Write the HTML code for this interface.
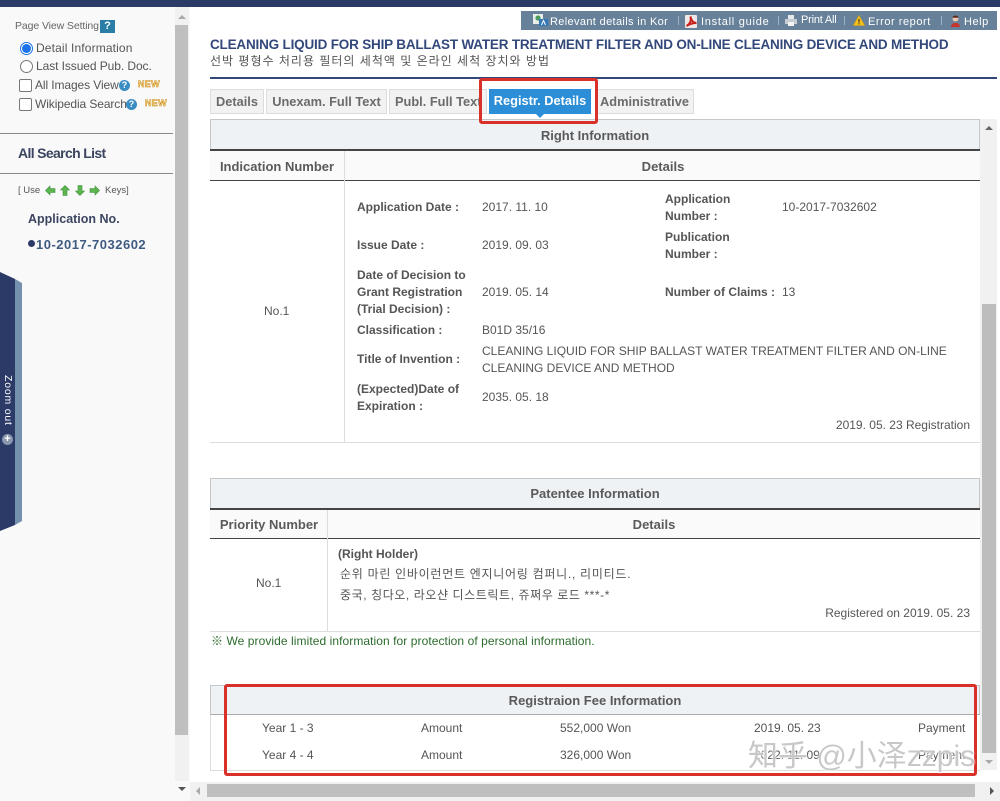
<!DOCTYPE html>
<html><head><meta charset="utf-8"><style>
html,body{margin:0;padding:0}
body{width:1000px;height:801px;position:relative;overflow:hidden;background:#fff;font-family:"Liberation Sans","Noto Sans CJK KR",sans-serif;font-size:12px;color:#555}
.t,.b{position:absolute;white-space:nowrap;line-height:17px}
.l{font-weight:bold;color:#555}
.h{font-weight:bold;color:#5a5a5a;font-size:13px;transform:translateX(-50%)}
.bar{position:absolute;left:210px}
.tab{position:absolute;top:89px;height:25px;background:#f2f2f2;border:1px solid #dcdcdc;box-sizing:border-box;font-weight:bold;color:#6b6b6b;font-size:12.8px;line-height:24px;text-align:center;white-space:nowrap;overflow:hidden}
.red{position:absolute;border:3px solid #d9302a;border-radius:3px;box-sizing:border-box}
.tb{position:absolute;top:15px;color:#fff;font-size:11px;letter-spacing:.75px;line-height:14px;white-space:nowrap}
.sep{position:absolute;top:16px;width:1px;height:9px;background:#9fb2c3}
.side{color:#555;font-size:12px}
.box{position:absolute;width:11px;height:11px;border:1px solid #777;border-radius:2px;background:#fff;left:19px}
.new{position:absolute;color:#fbe6a6;-webkit-text-stroke:.5px #c9860f;font-size:9px;font-weight:bold;line-height:9px;letter-spacing:.3px}
.q{position:absolute;width:11px;height:11px;border-radius:50%;background:#3a8cc4;color:#fff;font-size:9px;font-weight:bold;line-height:11px;text-align:center}
</style></head><body>
<div class="b" style="left:0;top:0;width:1000px;height:7px;background:#2b3a67"></div>
<div class="b" style="left:0;top:7px;width:190px;height:794px;background:#f9f9fa"></div>

<!-- left scrollbar -->
<div class="b" style="left:175px;top:7px;width:14px;height:774px;background:#f1f1f1"></div>
<div class="b" style="left:175px;top:25px;width:13px;height:710px;background:#bfbfbf"></div>
<svg class="b" style="left:176px;top:13px" width="12" height="8"><path d="M2 6L6 2L10 6Z" fill="#aaa"/></svg>
<svg class="b" style="left:176px;top:785px" width="12" height="8"><path d="M2 2L6 6L10 2Z" fill="#555"/></svg>

<!-- sidebar -->
<div class="t" style="left:15px;top:18px;font-size:10.5px;color:#666;letter-spacing:-.1px">Page View Setting</div>
<div class="b" style="left:100px;top:20px;width:15px;height:13px;background:#2a7ea6;color:#fff;font-weight:bold;font-size:11px;line-height:13px;text-align:center">?</div>
<div class="b" style="left:20px;top:42px;width:11px;height:11px;border:1px solid #1a73e8;border-radius:50%;background:#fff"></div>
<div class="b" style="left:22px;top:44px;width:9px;height:9px;border-radius:50%;background:#1a73e8"></div>
<div class="t side" style="left:36px;top:40px;letter-spacing:.14px">Detail Information</div>
<div class="b" style="left:20px;top:60px;width:11px;height:11px;border:1px solid #777;border-radius:50%;background:#fff"></div>
<div class="t side" style="left:36px;top:58px;letter-spacing:-.08px">Last Issued Pub. Doc.</div>
<div class="box" style="top:79px"></div>
<div class="t side" style="left:35px;top:77px;letter-spacing:-.1px">All Images View</div>
<div class="q" style="left:119px;top:80px">?</div>
<div class="new" style="left:138px;top:80px">NEW</div>
<div class="box" style="top:98px"></div>
<div class="t side" style="left:35px;top:96px;letter-spacing:-.1px">Wikipedia Search</div>
<div class="q" style="left:126px;top:99px">?</div>
<div class="new" style="left:145px;top:99px">NEW</div>
<div class="b" style="left:0;top:133px;width:173px;height:1px;background:#8a8a8a"></div>
<div class="t" style="left:18px;top:145px;font-size:14px;font-weight:bold;color:#3c4560;letter-spacing:-.65px">All Search List</div>
<div class="b" style="left:0;top:173px;width:173px;height:1px;background:#8a8a8a"></div>
<div class="t" style="left:18px;top:182px;font-size:9.5px;color:#555">[ Use</div>
<svg class="b" style="left:45px;top:185px" width="56" height="12"><g fill="#5cb54f" stroke="#3f8f3a" stroke-width=".6"><path d="M.5 5.500L5 1V3.500H10V7.500H5V10Z"/><path d="M20 .5L24.500 5H22V10.500H18V5H15.500Z"/><path d="M35 10.500L30.500 6H33V.5H37V6H39.500Z"/><path d="M54.500 5.500L50 1V3.500H45V7.500H50V10Z"/></g></svg>
<div class="t" style="left:105px;top:182px;font-size:9.5px;color:#555">Keys]</div>
<div class="t" style="left:28px;top:211px;font-size:12.5px;font-weight:bold;color:#3c4560">Application No.</div>
<div class="b" style="left:28px;top:240px;width:7px;height:7px;border-radius:50%;background:#2b3a67"></div>
<div class="t" style="left:36px;top:236px;font-size:13px;font-weight:bold;color:#3f5b80;letter-spacing:.5px">10-2017-7032602</div>

<!-- zoom out tab -->
<svg class="b" style="left:0;top:270px" width="24" height="265"><path d="M0 2L15 9V255L0 261Z" fill="#2b3a67"/><path d="M15 9L22 13V251L15 255Z" fill="#7590ad"/></svg>
<div class="t" style="left:0px;top:375px;width:15px;height:50px;color:#fff;font-size:10.5px;writing-mode:vertical-rl;letter-spacing:.8px;line-height:15px">Zoom out</div>
<div class="b" style="left:2px;top:434px;width:11px;height:11px;border-radius:50%;background:#8a97ae;color:#fff;font-size:11px;line-height:11px;text-align:center;font-weight:bold">+</div>

<!-- toolbar -->
<div class="b" style="left:521px;top:11px;width:476px;height:19px;background:#668199"></div>
<svg class="b" style="left:533px;top:13px" width="16" height="14"><rect x="0" y="1" width="10" height="10" fill="#e9efe8"/><circle cx="5" cy="5" r="2.6" fill="#4a9a62"/><rect x="6" y="6" width="9" height="7" fill="#3478b8"/><path d="M8.500 12L10.500 7.500L12.500 12" fill="none" stroke="#fff" stroke-width="1"/></svg>
<div class="tb" style="left:550px;letter-spacing:.35px">Relevant details in Kor</div>
<div class="sep" style="left:678px"></div>
<svg class="b" style="left:685px;top:15px" width="13" height="13"><rect width="12" height="13" rx="1" fill="#f0e8e6"/><path d="M1.500 11C5 9 6.500 5.500 5.500 1.500C6 5.500 8.500 8 11.500 8C8 8 4.500 9 1.500 11Z" fill="none" stroke="#c8201c" stroke-width="2"/></svg>
<div class="tb" style="left:701px">Install guide</div>
<div class="sep" style="left:778px"></div>
<svg class="b" style="left:785px;top:15px" width="12" height="11"><rect x="3" y="0" width="6" height="4" fill="#e6e9ec"/><rect x="0" y="4" width="12" height="5" fill="#c5ccd4"/><rect x="3" y="7" width="6" height="4" fill="#f5f5f5"/></svg>
<div class="tb" style="left:801px;top:13px;letter-spacing:-.2px;font-size:11px">Print All</div>
<div class="sep" style="left:844px"></div>
<svg class="b" style="left:853px;top:15px" width="12" height="11"><path d="M6 .5L11.700 10.500H.3Z" fill="#f2c21a" stroke="#d8a010" stroke-width=".6"/><rect x="5.400" y="4" width="1.200" height="3.600" fill="#533"/><rect x="5.400" y="8.200" width="1.200" height="1.200" fill="#533"/></svg>
<div class="tb" style="left:868px;letter-spacing:.55px">Error report</div>
<div class="sep" style="left:941px"></div>
<svg class="b" style="left:950px;top:15px" width="11" height="12"><circle cx="5.500" cy="3.500" r="3" fill="#efc6ae"/><path d="M5.500 .5a3 2.200 0 0 1 3 2.200h-6a3 2.200 0 0 1 3-2.200Z" fill="#5a2a22"/><path d="M1 12C1 6.500 10 6.500 10 12Z" fill="#c8352c"/></svg>
<div class="tb" style="left:964px;letter-spacing:.55px">Help</div>

<!-- title -->
<div class="t" style="left:210px;top:36px;font-size:13.5px;font-weight:bold;color:#33487a;letter-spacing:-.19px">CLEANING LIQUID FOR SHIP BALLAST WATER TREATMENT FILTER AND ON-LINE CLEANING DEVICE AND METHOD</div>
<div class="t" style="left:210px;top:53px;font-size:12px;color:#555;letter-spacing:1px">선박 평형수 처리용 필터의 세척액 및 온라인 세척 장치와 방법</div>
<div class="bar" style="top:77px;width:787px;height:2px;background:#33487a"></div>

<!-- tabs -->
<div class="tab" style="left:210px;width:54px">Details</div>
<div class="tab" style="left:266px;width:121px">Unexam. Full Text</div>
<div class="tab" style="left:389px;width:98px;text-align:left;padding-left:5px">Publ. Full Text</div>
<div class="b" style="left:489px;top:89px;width:102px;height:25px;background:#2b8ed6;color:#fff;font-weight:bold;font-size:12.8px;line-height:24px;text-align:center;white-space:nowrap">Registr. Details</div>
<div class="b" style="left:536px;top:114px;width:0;height:0;border:4px solid transparent;border-top-color:#2b8ed6;border-bottom:0"></div>
<div class="tab" style="left:595px;width:99px">Administrative</div>

<!-- inner scrollbar -->
<div class="b" style="left:980px;top:119px;width:17px;height:651px;background:#f1f1f1"></div>
<div class="b" style="left:982px;top:304px;width:14px;height:449px;background:#bdbdbd"></div>
<svg class="b" style="left:983px;top:124px" width="12" height="8"><path d="M2 6L6 2L10 6Z" fill="#666"/></svg>
<svg class="b" style="left:983px;top:758px" width="12" height="8"><path d="M2 2L6 6L10 2Z" fill="#aaa"/></svg>
<div class="b" style="left:190px;top:782px;width:810px;height:19px;background:#f1f1f1"></div>
<div class="b" style="left:207px;top:784px;width:768px;height:13px;background:#bfbfbf"></div>
<svg class="b" style="left:194px;top:786px" width="8" height="10"><path d="M6 1L2 5L6 9Z" fill="#aaa"/></svg>
<svg class="b" style="left:988px;top:786px" width="8" height="10"><path d="M2 1L6 5L2 9Z" fill="#555"/></svg>

<!-- Right Information -->
<div class="bar" style="top:119px;width:770px;height:30px;background:#eef2f5;border:1px solid #c4c8cb;border-bottom:0;box-sizing:border-box"></div>
<div class="t h" style="left:595px;top:127px">Right Information</div>
<div class="bar" style="top:149px;width:770px;height:2px;background:#444"></div>
<div class="bar" style="top:151px;width:770px;height:29px;background:#fafafa"></div>
<div class="t h" style="left:277px;top:158px">Indication Number</div>
<div class="t h" style="left:663px;top:158px">Details</div>
<div class="bar" style="top:180px;width:770px;height:1px;background:#444"></div>
<div class="b" style="left:344px;top:151px;width:1px;height:291px;background:#ddd"></div>
<div class="bar" style="top:442px;width:770px;height:1px;background:#ddd"></div>
<div class="t" style="left:264px;top:303px">No.1</div>

<div class="t l" style="left:357px;top:199px">Application Date :</div>
<div class="t" style="left:482px;top:199px">2017. 11. 10</div>
<div class="t l" style="left:665px;top:191px">Application<br>Number :</div>
<div class="t" style="left:782px;top:199px">10-2017-7032602</div>
<div class="t l" style="left:357px;top:237px">Issue Date :</div>
<div class="t" style="left:482px;top:237px">2019. 09. 03</div>
<div class="t l" style="left:665px;top:229px">Publication<br>Number :</div>
<div class="t l" style="left:357px;top:267px">Date of Decision to<br>Grant Registration<br>(Trial Decision) :</div>
<div class="t" style="left:482px;top:284px">2019. 05. 14</div>
<div class="t l" style="left:665px;top:284px">Number of Claims :</div>
<div class="t" style="left:782px;top:284px">13</div>
<div class="t l" style="left:357px;top:322px">Classification :</div>
<div class="t" style="left:482px;top:322px">B01D 35/16</div>
<div class="t l" style="left:357px;top:351px">Title of Invention :</div>
<div class="t" style="left:482px;top:343px">CLEANING LIQUID FOR SHIP BALLAST WATER TREATMENT FILTER AND ON-LINE<br>CLEANING DEVICE AND METHOD</div>
<div class="t l" style="left:357px;top:381px">(Expected)Date of<br>Expiration :</div>
<div class="t" style="left:482px;top:389px">2035. 05. 18</div>
<div class="t" style="right:30px;top:417px">2019. 05. 23 Registration</div>

<!-- Patentee -->
<div class="bar" style="top:478px;width:770px;height:30px;background:#eef2f5;border:1px solid #c4c8cb;border-bottom:0;box-sizing:border-box"></div>
<div class="t h" style="left:595px;top:485px">Patentee Information</div>
<div class="bar" style="top:508px;width:770px;height:2px;background:#444"></div>
<div class="bar" style="top:510px;width:770px;height:28px;background:#fafafa"></div>
<div class="t h" style="left:269px;top:516px">Priority Number</div>
<div class="t h" style="left:654px;top:516px">Details</div>
<div class="bar" style="top:538px;width:770px;height:1px;background:#444"></div>
<div class="b" style="left:327px;top:510px;width:1px;height:121px;background:#ddd"></div>
<div class="bar" style="top:631px;width:770px;height:1px;background:#ddd"></div>
<div class="t" style="left:256px;top:575px">No.1</div>
<div class="t l" style="left:338px;top:546px">(Right Holder)</div>
<div class="t" style="left:340px;top:566px;letter-spacing:.72px">순위 마린 인바이런먼트 엔지니어링 컴퍼니., 리미티드.</div>
<div class="t" style="left:340px;top:587px;letter-spacing:.58px">중국, 칭다오, 라오샨 디스트릭트, 쥬쩌우 로드 ***-*</div>
<div class="t" style="right:30px;top:605px">Registered on 2019. 05. 23</div>
<div class="t" style="left:211px;top:633px;color:#2c6b2c;letter-spacing:.07px">※ We provide limited information for protection of personal information.</div>

<!-- Fee -->
<div class="bar" style="top:685px;width:770px;height:30px;background:#eef2f5;border:1px solid #c4c8cb;border-bottom:1px solid #aaa;box-sizing:border-box"></div>
<div class="t h" style="left:595px;top:692px">Registraion Fee Information</div>
<div class="b" style="left:210px;top:715px;width:1px;height:56px;background:#ddd"></div>
<div class="bar" style="top:770px;width:770px;height:1px;background:#ddd"></div>
<div class="t" style="left:262px;top:720px">Year 1 - 3</div>
<div class="t" style="left:421px;top:720px">Amount</div>
<div class="t" style="left:560px;top:720px">552,000 Won</div>
<div class="t" style="left:754px;top:720px">2019. 05. 23</div>
<div class="t" style="left:918px;top:720px">Payment</div>
<div class="t" style="left:262px;top:747px">Year 4 - 4</div>
<div class="t" style="left:421px;top:747px">Amount</div>
<div class="t" style="left:560px;top:747px">326,000 Won</div>
<div class="t" style="left:754px;top:747px">2022. 11. 09</div>
<div class="t" style="left:918px;top:747px">Payment</div>

<!-- red annotations -->
<div class="red" style="left:479px;top:78px;width:119px;height:46px"></div>
<div class="red" style="left:224px;top:684px;width:753px;height:92px"></div>

<!-- watermark -->
<div class="t" style="left:748px;top:738px;font-size:30px;line-height:38px;color:rgba(190,190,190,.85);text-shadow:0 0 2px #fff,0 0 2px #fff;font-family:'Liberation Sans','Noto Sans CJK SC',sans-serif">知乎 @小泽zzpis</div>
</body></html>
